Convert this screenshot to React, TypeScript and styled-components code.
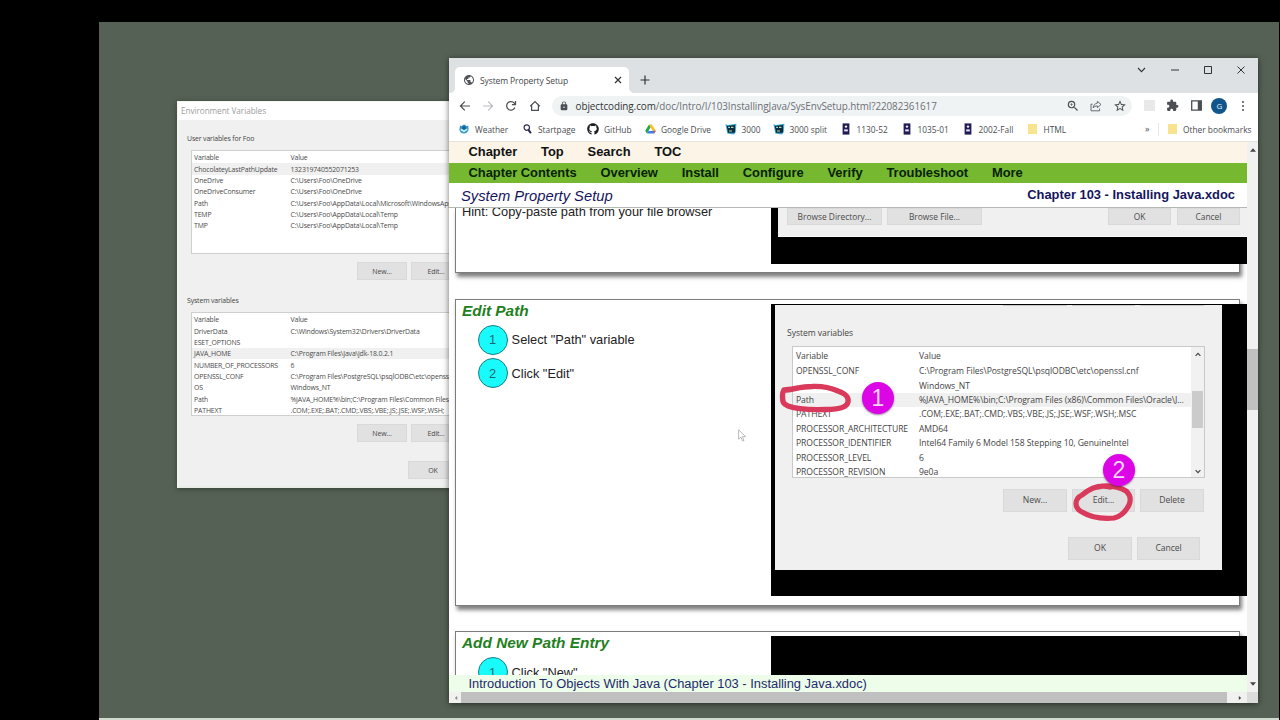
import React from "react";
import styled, { createGlobalStyle, css } from "styled-components";
import { MdHttps, MdExtension, MdPublic, MdZoomIn, MdStarBorder } from "react-icons/md";
import { FaGithub } from "react-icons/fa";

const GlobalStyle = createGlobalStyle`
  * { box-sizing: border-box; }
  html, body { margin: 0; padding: 0; background: #000; overflow: hidden; }
  svg { display: block; }
`;

const segoe = `"Open Sans", "Noto Sans", sans-serif`;
const arial = `"Liberation Sans", Arial, sans-serif`;

const Screen = styled.div`
  width: 1280px;
  height: 720px;
  padding: 22px 1px 0 99px;
  background: #000;
  overflow: hidden;
`;

const Desktop = styled.main`
  position: relative;
  height: 698px;
  background: #556154;
  border-bottom: 2px solid #cfdccd;
`;

/* ---------- shared dialog parts ---------- */

const DialogButton = styled.div<{ $w: number; $h: number; $size: number }>`
  flex: none;
  width: ${(p) => p.$w}px;
  height: ${(p) => p.$h}px;
  display: flex;
  align-items: center;
  justify-content: center;
  background: #e1e1e1;
  border: 1px solid #d9d9d9;
  font-size: ${(p) => p.$size}px;
  color: #4a4a4a;
  white-space: nowrap;
`;

const ListRow = styled.div<{ $cols: string; $h: number; $selected?: boolean }>`
  flex: none;
  display: grid;
  grid-template-columns: ${(p) => p.$cols};
  align-items: center;
  height: ${(p) => p.$h}px;
  background: ${(p) => (p.$selected ? "#f0f0f0" : "transparent")};
  white-space: nowrap;
`;

/* ---------- Environment Variables window ---------- */

const EnvWindow = styled.section`
  position: absolute;
  left: 78px;
  top: 79px;
  width: 420px;
  height: 387px;
  background: #f0f0f0;
  border: 1px solid #f4f6f2;
  border-bottom: 2px solid #e9efe6;
  box-shadow: 0 1px 5px rgba(0, 0, 0, 0.35);
  font-family: ${segoe};
  font-size: 6.9px;
  letter-spacing: -0.14px;
  color: #4a4a4a;
  overflow: hidden;
`;

const EnvTitle = styled.header`
  height: 18px;
  padding: 0 0 0 3px;
  line-height: 18px;
  background: #fff;
  font-size: 8.2px;
  letter-spacing: -0.06px;
  color: #9d9d9d;
`;

const EnvGroup = styled.div<{ $top: number }>`
  margin: ${(p) => p.$top}px 0 0 9px;
`;

const EnvLabel = styled.div`
  height: 12px;
  line-height: 12px;
  color: #444;
`;

const EnvList = styled.div<{ $h: number }>`
  height: ${(p) => p.$h}px;
  margin: 5px 0 0 4px;
  padding-top: 1px;
  background: #fff;
  border: 1px solid #cfcfcf;
  overflow: hidden;
`;

const ButtonRow = styled.div<{ $left: number; $top: number; $gap: number }>`
  display: flex;
  gap: ${(p) => p.$gap}px;
  margin: ${(p) => p.$top}px 0 0 ${(p) => p.$left}px;
`;

const userVars = [
  ["ChocolateyLastPathUpdate", "132319740552071253"],
  ["OneDrive", "C:\\Users\\Foo\\OneDrive"],
  ["OneDriveConsumer", "C:\\Users\\Foo\\OneDrive"],
  ["Path", "C:\\Users\\Foo\\AppData\\Local\\Microsoft\\WindowsApps"],
  ["TEMP", "C:\\Users\\Foo\\AppData\\Local\\Temp"],
  ["TMP", "C:\\Users\\Foo\\AppData\\Local\\Temp"],
];

const systemVars = [
  ["DriverData", "C:\\Windows\\System32\\Drivers\\DriverData"],
  ["ESET_OPTIONS", ""],
  ["JAVA_HOME", "C:\\Program Files\\Java\\jdk-18.0.2.1"],
  ["NUMBER_OF_PROCESSORS", "6"],
  ["OPENSSL_CONF", "C:\\Program Files\\PostgreSQL\\psqlODBC\\etc\\openssl.cnf"],
  ["OS", "Windows_NT"],
  ["Path", "%JAVA_HOME%\\bin;C:\\Program Files\\Common Files"],
  ["PATHEXT", ".COM;.EXE;.BAT;.CMD;.VBS;.VBE;.JS;.JSE;.WSF;.WSH;"],
];

const EnvCell = styled.span`
  padding-left: 2px;
`;

function EnvTable({ rows, selected, h }: { rows: string[][]; selected: number; h: number }) {
  return (
    <EnvList $h={h}>
      <ListRow $cols="96.5px 1fr" $h={11.35}>
        <EnvCell>Variable</EnvCell>
        <EnvCell>Value</EnvCell>
      </ListRow>
      {rows.map((r, i) => (
        <ListRow key={r[0]} $cols="96.5px 1fr" $h={11.35} $selected={i === selected}>
          <EnvCell>{r[0]}</EnvCell>
          <EnvCell>{r[1]}</EnvCell>
        </ListRow>
      ))}
    </EnvList>
  );
}

function EnvironmentVariables() {
  return (
    <EnvWindow>
      <EnvTitle>Environment Variables</EnvTitle>
      <EnvGroup $top={13}>
        <EnvLabel>User variables for Foo</EnvLabel>
        <EnvTable rows={userVars} selected={0} h={104} />
        <ButtonRow $left={170} $top={8} $gap={4}>
          <DialogButton $w={50} $h={18} $size={7}>New...</DialogButton>
          <DialogButton $w={50} $h={18} $size={7}>Edit...</DialogButton>
        </ButtonRow>
      </EnvGroup>
      <EnvGroup $top={15}>
        <EnvLabel>System variables</EnvLabel>
        <EnvTable rows={systemVars} selected={2} h={104} />
        <ButtonRow $left={170} $top={8} $gap={4}>
          <DialogButton $w={50} $h={18} $size={7}>New...</DialogButton>
          <DialogButton $w={50} $h={18} $size={7}>Edit...</DialogButton>
        </ButtonRow>
        <ButtonRow $left={221} $top={19} $gap={4}>
          <DialogButton $w={50} $h={18} $size={7}>OK</DialogButton>
        </ButtonRow>
      </EnvGroup>
    </EnvWindow>
  );
}

/* ---------- browser window ---------- */

const Browser = styled.section`
  position: absolute;
  left: 350px;
  top: 36px;
  width: 809px;
  height: 645px;
  display: flex;
  flex-direction: column;
  background: #fff;
  box-shadow: 0 1px 6px rgba(0, 0, 0, 0.55);
  font-family: ${segoe};
`;

const TabStrip = styled.div`
  flex: none;
  height: 35px;
  display: flex;
  background: #dee1e3;
`;

const Tab = styled.div`
  position: relative;
  width: 174px;
  height: 26px;
  margin: 9px 0 0 6px;
  padding: 0 7px 0 8px;
  display: flex;
  align-items: center;
  background: #fff;
  border-radius: 5px 5px 0 0;
  font-size: 8.5px;
  letter-spacing: -0.11px;
  color: #45484c;

  &::before,
  &::after {
    content: "";
    position: absolute;
    bottom: 0;
    width: 5px;
    height: 5px;
  }
  &::before {
    left: -5px;
    background: radial-gradient(circle at 0 0, #dee1e3 4.6px, #fff 5.2px);
  }
  &::after {
    right: -5px;
    background: radial-gradient(circle at 100% 0, #dee1e3 4.6px, #fff 5.2px);
  }
`;

const TabTitle = styled.span`
  flex: 1;
  padding-left: 5px;
`;

const NewTab = styled.div`
  margin: 17px auto 0 11px;
`;

const WindowControls = styled.div`
  display: flex;
`;

const Control = styled.div`
  width: 33.4px;
  height: 24px;
  display: flex;
  align-items: center;
  justify-content: center;
`;

const Toolbar = styled.div`
  flex: none;
  height: 25px;
  display: flex;
  align-items: center;
  padding-left: 4px;
`;

const ToolButton = styled.div`
  flex: none;
  width: 23.4px;
  height: 20px;
  display: flex;
  align-items: center;
  justify-content: center;
`;

const Omnibox = styled.div`
  width: 580px;
  height: 20px;
  margin: 1px 6px 0 5px;
  display: flex;
  align-items: center;
  border-radius: 10px;
  background: #f0f3f4;
  font-size: 9.9px;
  letter-spacing: -0.07px;
  color: #6c7075;
`;

const LockSlot = styled.div`
  width: 24px;
  padding-left: 7px;
`;

const Url = styled.div`
  flex: 1;
  white-space: nowrap;
`;

const Host = styled.span`
  color: #303336;
`;

const Avatar = styled.div`
  width: 16px;
  height: 16px;
  border-radius: 50%;
  background: #10568c;
  color: #e8f0f6;
  font-size: 8px;
  line-height: 16px;
  text-align: center;
`;

const Ghost = styled.div`
  width: 11px;
  height: 11px;
  background: #e9e9e9;
`;

const Bookmarks = styled.div`
  flex: none;
  height: 24px;
  padding: 0 0 1px 9px;
  display: flex;
  align-items: center;
  border-bottom: 1px solid #e6e3dd;
  font-size: 8.35px;
  color: #4a4d51;
`;

const Bookmark = styled.div<{ $w?: number }>`
  flex: none;
  width: ${(p) => (p.$w ? `${p.$w}px` : "auto")};
  display: flex;
  align-items: center;
  gap: 5px;
  white-space: nowrap;
`;

const BookmarkIcon = styled.span`
  width: 12px;
  height: 12px;
  display: flex;
  align-items: center;
  justify-content: center;
`;

const Folder = styled.i`
  width: 9px;
  height: 10px;
  background: #f8e38e;
`;

const More = styled.div`
  margin-left: auto;
  width: 13px;
  font-size: 9px;
  line-height: 12px;
`;

const Others = styled.div`
  width: 100px;
  height: 13px;
  display: flex;
  align-items: center;
  border-left: 1px solid #e4e6e8;
  padding-left: 7px;
`;

const Viewport = styled.div`
  flex: 1;
  min-height: 0;
  display: grid;
  grid-template-columns: 798px 11px;
  grid-template-rows: 550px 11px;
  font-family: ${arial};
`;

const Page = styled.div`
  min-width: 0;
  display: flex;
  flex-direction: column;
  background: #fff;
  overflow: hidden;
`;

const Nav = styled.nav<{ $green?: boolean }>`
  flex: none;
  height: 20.5px;
  display: flex;
  align-items: center;
  gap: 23.85px;
  padding: ${(p) => (p.$green ? "0" : "0 0 2px")};
  padding-left: 19.5px;
  background: ${(p) => (p.$green ? "#76b82f" : "#fbf4e7")};
  color: ${(p) => (p.$green ? "#06220a" : "#111")};
  font-size: 12.9px;
  font-weight: bold;
  white-space: nowrap;
`;

const PageHeader = styled.header`
  flex: none;
  height: 24.5px;
  display: flex;
  align-items: center;
  justify-content: space-between;
  padding: 0 12px 0 12px;
  border-bottom: 1px solid #b4b8b4;
  color: #15155e;
`;

const PageTitle = styled.h1`
  margin: 2px 0 0;
  font-size: 14.75px;
  font-style: italic;
  font-weight: normal;
`;

const ChapterName = styled.h2`
  margin: 0;
  font-size: 12.9px;
`;

const Scroller = styled.div`
  flex: 1;
  min-height: 0;
  overflow: hidden;
  padding-left: 6px;
`;

const Card = styled.article<{ $h: number; $mb: number; $cut?: boolean }>`
  display: flex;
  width: 785px;
  height: ${(p) => p.$h}px;
  margin-bottom: ${(p) => p.$mb}px;
  border: 1px solid #7c7c7c;
  ${(p) => p.$cut && css`border-top: 0;`}
  box-shadow: 2px 4px 4px rgba(0, 0, 0, 0.5);
  background: #fff;
  font-size: 12.8px;
  color: #222;
`;

const CardText = styled.div`
  flex: none;
  width: 315px;
  padding: 0 0 0 6px;
`;

const Hint = styled.p`
  margin: -4px 0 0;
  line-height: 16px;
`;

const CardTitle = styled.h3`
  margin: 1px 0 5px;
  font-size: 15.4px;
  line-height: 19px;
  font-style: italic;
  color: #1f8022;
`;

const Step = styled.div`
  display: flex;
  align-items: center;
  gap: 4px;
  height: 30px;
  margin: 0 0 3.6px 15.6px;
`;

const StepNumber = styled.span`
  width: 30px;
  height: 30px;
  border-radius: 50%;
  border: 1px solid #177f86;
  background: #18fbfa;
  color: #126a70;
  display: flex;
  align-items: center;
  justify-content: center;
`;

const Figure = styled.div<{ $h: number; $top: number; $pad: string }>`
  position: relative;
  flex: none;
  width: 476px;
  height: ${(p) => p.$h}px;
  margin-top: ${(p) => p.$top}px;
  padding: ${(p) => p.$pad};
  background: #000;
  font-family: ${segoe};
  overflow: hidden;
`;

const BrowseDialog = styled.div`
  height: 29px;
  background: #f0f0f0;
  border-bottom: 1px solid #fbfbfb;
  display: flex;
  padding-left: 9px;
`;

const Spacer = styled.div<{ $w: number }>`
  flex: none;
  width: ${(p) => p.$w}px;
`;

const VarsDialog = styled.div`
  height: 265px;
  padding: 0 17px 0 12px;
  background: #f0f0f0;
  color: #444;
  font-size: 8.6px;
  letter-spacing: -0.06px;
`;

const ButtonEdges = styled.div`
  display: grid;
  grid-template-columns: 64px 63px 64px;
  gap: 5px;
  height: 21px;
  margin-left: 216px;
`;

const ButtonEdge = styled.i`
  height: 1px;
  background: #c9c9c9;
`;

const VarsLabel = styled.div`
  height: 15px;
  line-height: 14px;
`;

const VarsList = styled.div`
  height: 132px;
  margin: 5px 0 0 5px;
  border: 1px solid #c9c9c9;
  background: #fff;
  display: grid;
  grid-template-columns: 1fr 13px;
  overflow: hidden;
`;

const VarsRows = styled.div`
  min-width: 0;
  min-height: 0;
  padding-top: 2px;
  overflow: hidden;
`;

const VarsCell = styled.span`
  padding-left: 3px;
`;

const ListScroll = styled.div`
  display: flex;
  flex-direction: column;
  justify-content: space-between;
  align-items: center;
  padding: 5px 0 3px;
  background: #f1f1f1;
`;

const ListThumb = styled.div`
  width: 11px;
  height: 37px;
  margin-bottom: 7px;
  background: #cbcbcb;
`;

const Marks = styled.svg`
  position: absolute;
  left: 0;
  top: 0;
`;

const Marker = styled.div<{ $x: number; $y: number }>`
  position: absolute;
  left: ${(p) => p.$x}px;
  top: ${(p) => p.$y}px;
  width: 32px;
  height: 32px;
  border-radius: 50%;
  background: #dc05e6;
  box-shadow: 0 1px 2px rgba(60, 0, 70, 0.5);
  color: #f7d3fa;
  font-family: ${arial};
  font-size: 23px;
  line-height: 33px;
  text-align: center;
`;

const PageFooter = styled.footer`
  flex: none;
  height: 17px;
  padding-left: 19.5px;
  line-height: 17px;
  background: #edfde9;
  color: #1d2a6c;
  font-size: 12.88px;
  white-space: nowrap;
`;

const ScrollY = styled.div`
  display: flex;
  flex-direction: column;
  align-items: center;
  justify-content: space-between;
  padding: 5px 0 5px;
  background: #f1f1f0;
`;

const ThumbY = styled.div`
  width: 11px;
  height: 61px;
  margin-bottom: 76px;
  background: #c0c0c0;
`;

const ScrollX = styled.div`
  display: flex;
  align-items: center;
  padding: 0 5px 0 5px;
  background: #f1f1f0;
`;

const ThumbX = styled.div`
  flex: none;
  width: 766px;
  height: 11px;
  margin: 0 11px 0 3px;
  background: #c0c0c0;
`;

const Corner = styled.div`
  background: #dcdcdc;
`;

const Cursor = styled.svg`
  position: absolute;
  left: 639px;
  top: 407px;
`;

/* ---------- icons ---------- */

const Arrow = ({ right, color }: { right?: boolean; color: string }) => (
  <svg width="12" height="12" viewBox="0 0 12 12" fill="none" stroke={color} strokeWidth="1.2">
    {right ? <path d="M1 6H10.6M6.2 1.6L10.6 6L6.2 10.4" /> : <path d="M11 6H1.4M5.8 1.6L1.4 6L5.8 10.4" />}
  </svg>
);

const Reload = () => (
  <svg width="12" height="12" viewBox="0 0 12 12" fill="none" stroke="#4b4e52" strokeWidth="1.2">
    <path d="M9.9 7.6A4.3 4.3 0 1 1 9.3 3.1L10.2 4.2" />
    <path d="M10.5 1V4.6H6.9" />
  </svg>
);

const Home = () => (
  <svg width="12" height="12" viewBox="0 0 12 12" fill="none" stroke="#4b4e52" strokeWidth="1.2">
    <path d="M1.2 6.2L6 1.6L10.8 6.2M2.6 5.2V10.4H9.4V5.2" />
  </svg>
);

const Share = () => (
  <svg width="12" height="12" viewBox="0 0 12 12" fill="none" stroke="#5f6368" strokeWidth="0.95">
    <path d="M2.6 4.2H1V10.8H9.6V8.6" />
    <path d="M7.4 1.3L11 4.5L7.4 7.7V5.9C5.4 5.9 4.1 6.6 3.1 8C3.4 5.4 4.8 3.5 7.4 3.1Z" />
  </svg>
);

const SidePanel = () => (
  <svg width="11" height="11" viewBox="0 0 11 11">
    <path d="M0.7 0.9H10.3V10.1H0.7Z" fill="none" stroke="#4b4e52" strokeWidth="1.3" />
    <path d="M6.8 0.9H10.3V10.1H6.8Z" fill="#4b4e52" />
  </svg>
);

const Dots = () => (
  <svg width="4" height="12" viewBox="0 0 4 12" fill="#4b4e52">
    <circle cx="2" cy="2" r="1" />
    <circle cx="2" cy="6" r="1" />
    <circle cx="2" cy="10" r="1" />
  </svg>
);

const WeatherIcon = () => (
  <svg width="10" height="10" viewBox="0 0 10 10">
    <path d="M1 1.6L3 2.2C4 0.4 6.4 0.4 7.2 2.2L9.2 1.4L9.6 6C8.6 8.4 6.8 9.6 5 9.6C3 9.6 1.2 8.4 0.4 6Z" fill="#2f93c8" />
    <path d="M2 4.6L5 6.2L8.2 4.4L8.6 6L5 8.2L1.4 6.2Z" fill="#c9f0fa" />
    <circle cx="5" cy="3.8" r="1.8" fill="#145b93" />
  </svg>
);

const SearchMark = () => (
  <svg width="9" height="10" viewBox="0 0 9 10" fill="none" stroke="#2b2a50">
    <circle cx="3.8" cy="3.6" r="2.7" strokeWidth="1.2" />
    <path d="M5.4 5.8L7.9 9.2" strokeWidth="2" />
  </svg>
);

const DriveIcon = () => (
  <svg width="11" height="10" viewBox="0 0 12 11">
    <path d="M4.2 0.8H7.8L4 7.4L2 10.4L0.2 7.4Z" fill="#23a455" />
    <path d="M4.2 0.8H7.8L11.8 7.4H8.2Z" fill="#fbc322" />
    <path d="M4 7.4H11.8L10 10.4H2Z" fill="#3f7fe8" />
    <path d="M9.2 7.4H11.8L10 10.4Z" fill="#e5483a" />
    <path d="M6 4L8 7.4H4Z" fill="#fff" />
  </svg>
);

const ScreenIcon = () => (
  <svg width="12" height="12" viewBox="0 0 12 12">
    <path d="M0.4 1.2L3 2L11.4 0.8L10.8 9L9 11.4L2.4 10.6Z" fill="#35a9d6" />
    <path d="M1.8 3L10 2V9.8H3Z" fill="#0f2b3a" />
    <path d="M3.2 3.8H5V5H3.2ZM6 3.8H8.4V5H6ZM4 7.6H7V8.6H4Z" fill="#a9dfc8" />
  </svg>
);

const TowerIcon = () => (
  <svg width="8" height="12" viewBox="0 0 8 12">
    <path d="M0.6 0.4H7.4V11.6H0.6Z" fill="#211c55" />
    <circle cx="4" cy="3.6" r="1.2" fill="#f2f2ff" />
    <path d="M2.2 6.4H5.8V8.4H2.2Z" fill="#e8e8fa" />
  </svg>
);

const Triangle = ({ dir, color = "#444" }: { dir: "up" | "down" | "left" | "right"; color?: string }) => {
  const d = {
    up: "M0 4L2.5 1L5 4Z",
    down: "M0 1L2.5 4L5 1Z",
    left: "M4 0L1 2.5L4 5Z",
    right: "M1 0L4 2.5L1 5Z",
  }[dir];
  return (
    <svg width="6" height="6" viewBox="0 0 5 5" fill={color}>
      <path d={d} />
    </svg>
  );
};

const Chevron = ({ up }: { up?: boolean }) => (
  <svg width="6" height="5" viewBox="0 0 6 5" fill="none" stroke="#444" strokeWidth="1.2">
    <path d={up ? "M0.6 3.8L3 1.4L5.4 3.8" : "M0.6 1.2L3 3.6L5.4 1.2"} />
  </svg>
);

/* ---------- page content ---------- */

const pathVars = [
  ["OPENSSL_CONF", "C:\\Program Files\\PostgreSQL\\psqlODBC\\etc\\openssl.cnf"],
  ["", "Windows_NT"],
  ["Path", "%JAVA_HOME%\\bin;C:\\Program Files (x86)\\Common Files\\Oracle\\J..."],
  ["PATHEXT", ".COM;.EXE;.BAT;.CMD;.VBS;.VBE;.JS;.JSE;.WSF;.WSH;.MSC"],
  ["PROCESSOR_ARCHITECTURE", "AMD64"],
  ["PROCESSOR_IDENTIFIER", "Intel64 Family 6 Model 158 Stepping 10, GenuineIntel"],
  ["PROCESSOR_LEVEL", "6"],
  ["PROCESSOR_REVISION", "9e0a"],
];

const bookmarks: { icon: React.ReactNode; label: string; w: number }[] = [
  { icon: <WeatherIcon />, label: "Weather", w: 63 },
  { icon: <SearchMark />, label: "Startpage", w: 66 },
  { icon: <FaGithub size={12} color="#1b1f23" />, label: "GitHub", w: 57 },
  { icon: <DriveIcon />, label: "Google Drive", w: 80.5 },
  { icon: <ScreenIcon />, label: "3000", w: 48 },
  { icon: <ScreenIcon />, label: "3000 split", w: 67 },
  { icon: <TowerIcon />, label: "1130-52", w: 61 },
  { icon: <TowerIcon />, label: "1035-01", w: 61 },
  { icon: <TowerIcon />, label: "2002-Fall", w: 65 },
  { icon: <Folder />, label: "HTML", w: 60 },
];

function VariablesFigure() {
  return (
    <Figure $h={292} $top={4} $pad="1px 25px 0 4px">
      <VarsDialog>
        <ButtonEdges>
          <ButtonEdge />
          <ButtonEdge />
          <ButtonEdge />
        </ButtonEdges>
        <VarsLabel>System variables</VarsLabel>
        <VarsList>
          <VarsRows>
            <ListRow $cols="123px 1fr" $h={15.4}>
              <VarsCell>Variable</VarsCell>
              <VarsCell>Value</VarsCell>
            </ListRow>
            {pathVars.map((r, i) => (
              <ListRow key={i} $cols="123px 1fr" $h={14.45} $selected={i === 2}>
                <VarsCell>{r[0]}</VarsCell>
                <VarsCell>{r[1]}</VarsCell>
              </ListRow>
            ))}
          </VarsRows>
          <ListScroll>
            <Chevron up />
            <ListThumb />
            <Chevron />
          </ListScroll>
        </VarsList>
        <ButtonRow $left={216} $top={11} $gap={5}>
          <DialogButton $w={64} $h={23} $size={8.6}>New...</DialogButton>
          <DialogButton $w={63} $h={23} $size={8.6}>Edit...</DialogButton>
          <DialogButton $w={64} $h={23} $size={8.6}>Delete</DialogButton>
        </ButtonRow>
        <ButtonRow $left={281} $top={25} $gap={5}>
          <DialogButton $w={64} $h={23} $size={8.6}>OK</DialogButton>
          <DialogButton $w={63} $h={23} $size={8.6}>Cancel</DialogButton>
        </ButtonRow>
      </VarsDialog>
      <Marks width="476" height="292" viewBox="771 304 476 292" fill="none" stroke="#d9395a" strokeLinecap="round" strokeLinejoin="round">
        <path strokeWidth="5.4" d="M784 390C792 390 800 386.5 812 386.5C822 386 831 388 838 391C846 394 849 397 848 402C847 407 840 409.5 826 409.5C812 410 796 409 788 406C783 404 782.5 402 782.5 396C782.5 392 783 390 786 390" />
        <path strokeWidth="5.2" d="M1110 487C1098 484 1088 490 1082 495C1074 499 1074 508 1082 512C1090 517 1102 519 1114 518C1122 516 1126 511 1129 505C1132 498 1129 491 1122 489C1116 486 1106 485 1098 487" />
      </Marks>
      <Marker $x={91} $y={78.5}>1</Marker>
      <Marker $x={332} $y={150.5}>2</Marker>
    </Figure>
  );
}

export default function App() {
  return (
    <Screen>
      <GlobalStyle />
      <Desktop>
        <EnvironmentVariables />
        <Browser>
          <TabStrip>
            <Tab>
              <MdPublic size={12} color="#4f5358" />
              <TabTitle>System Property Setup</TabTitle>
              <svg width="8" height="8" viewBox="0 0 8 8" stroke="#333" strokeWidth="1.2">
                <path d="M1 1L7 7M7 1L1 7" />
              </svg>
            </Tab>
            <NewTab>
              <svg width="10" height="10" viewBox="0 0 10 10" stroke="#333" strokeWidth="1.2">
                <path d="M5 0.5V9.5M0.5 5H9.5" />
              </svg>
            </NewTab>
            <WindowControls>
              <Control>
                <svg width="9" height="6" viewBox="0 0 9 6" fill="none" stroke="#333" strokeWidth="1.1">
                  <path d="M1 1L4.5 4.6L8 1" />
                </svg>
              </Control>
              <Control>
                <svg width="8" height="2" viewBox="0 0 8 2"><path d="M0 0.5H8V1.5H0Z" fill="#333" /></svg>
              </Control>
              <Control>
                <svg width="8" height="8" viewBox="0 0 8 8" fill="none" stroke="#333"><path d="M0.5 0.5H7.5V7.5H0.5Z" /></svg>
              </Control>
              <Control>
                <svg width="8" height="8" viewBox="0 0 8 8" stroke="#333"><path d="M0.5 0.5L7.5 7.5M7.5 0.5L0.5 7.5" /></svg>
              </Control>
            </WindowControls>
          </TabStrip>

          <Toolbar>
            <ToolButton><Arrow color="#4b4e52" /></ToolButton>
            <ToolButton><Arrow right color="#b9bcbf" /></ToolButton>
            <ToolButton><Reload /></ToolButton>
            <ToolButton><Home /></ToolButton>
            <Omnibox>
              <LockSlot><MdHttps size={10} color="#4b4e52" /></LockSlot>
              <Url><Host>objectcoding.com</Host>/doc/Intro/I/103InstallingJava/SysEnvSetup.html?22082361617</Url>
              <ToolButton><MdZoomIn size={14} color="#4b4e52" /></ToolButton>
              <ToolButton><Share /></ToolButton>
              <ToolButton><MdStarBorder size={14} color="#4b4e52" /></ToolButton>
            </Omnibox>
            <ToolButton><Ghost /></ToolButton>
            <ToolButton><MdExtension size={13} color="#4b4e52" /></ToolButton>
            <ToolButton><SidePanel /></ToolButton>
            <ToolButton><Avatar>G</Avatar></ToolButton>
            <ToolButton><Dots /></ToolButton>
          </Toolbar>

          <Bookmarks>
            {bookmarks.map((b) => (
              <Bookmark key={b.label} $w={b.w}>
                <BookmarkIcon>{b.icon}</BookmarkIcon>
                {b.label}
              </Bookmark>
            ))}
            <More>»</More>
            <Others>
              <Bookmark>
                <BookmarkIcon><Folder /></BookmarkIcon>
                Other bookmarks
              </Bookmark>
            </Others>
          </Bookmarks>

          <Viewport>
            <Page>
              <Nav>
                <span>Chapter</span><span>Top</span><span>Search</span><span>TOC</span>
              </Nav>
              <Nav $green>
                <span>Chapter Contents</span><span>Overview</span><span>Install</span><span>Configure</span>
                <span>Verify</span><span>Troubleshoot</span><span>More</span>
              </Nav>
              <PageHeader>
                <PageTitle>System Property Setup</PageTitle>
                <ChapterName>Chapter 103 - Installing Java.xdoc</ChapterName>
              </PageHeader>
              <Scroller>
                <Card $h={65} $mb={26} $cut>
                  <CardText><Hint>Hint: Copy-paste path from your file browser</Hint></CardText>
                  <Figure $h={56} $top={0} $pad="0 0 0 7px">
                    <BrowseDialog>
                      <DialogButton $w={95} $h={17} $size={8.4}>Browse Directory...</DialogButton>
                      <Spacer $w={5} />
                      <DialogButton $w={95} $h={17} $size={8.4}>Browse File...</DialogButton>
                      <Spacer $w={126} />
                      <DialogButton $w={63} $h={17} $size={8.4}>OK</DialogButton>
                      <Spacer $w={6} />
                      <DialogButton $w={63} $h={17} $size={8.4}>Cancel</DialogButton>
                    </BrowseDialog>
                  </Figure>
                </Card>
                <Card $h={307} $mb={25.5}>
                  <CardText>
                    <CardTitle>Edit Path</CardTitle>
                    <Step><StepNumber>1</StepNumber>Select "Path" variable</Step>
                    <Step><StepNumber>2</StepNumber>Click "Edit"</Step>
                  </CardText>
                  <VariablesFigure />
                </Card>
                <Card $h={160} $mb={0}>
                  <CardText>
                    <CardTitle>Add New Path Entry</CardTitle>
                    <Step><StepNumber>1</StepNumber>Click "New"</Step>
                  </CardText>
                  <Figure $h={140} $top={4} $pad="0" />
                </Card>
              </Scroller>
              <PageFooter>Introduction To Objects With Java (Chapter 103 - Installing Java.xdoc)</PageFooter>
            </Page>
            <ScrollY>
              <Triangle dir="up" />
              <ThumbY />
              <Triangle dir="down" />
            </ScrollY>
            <ScrollX>
              <Triangle dir="left" color="#888" />
              <ThumbX />
              <Triangle dir="right" />
            </ScrollX>
            <Corner />
          </Viewport>
        </Browser>
        <Cursor width="9" height="13" viewBox="0 0 9 13" fill="#fff" stroke="#a8a8a8" strokeWidth="0.8">
          <path d="M0.6 0.8V10.2L2.9 8.2L4.6 12L6 11.4L4.4 7.7L7.6 7.6Z" />
        </Cursor>
      </Desktop>
    </Screen>
  );
}
